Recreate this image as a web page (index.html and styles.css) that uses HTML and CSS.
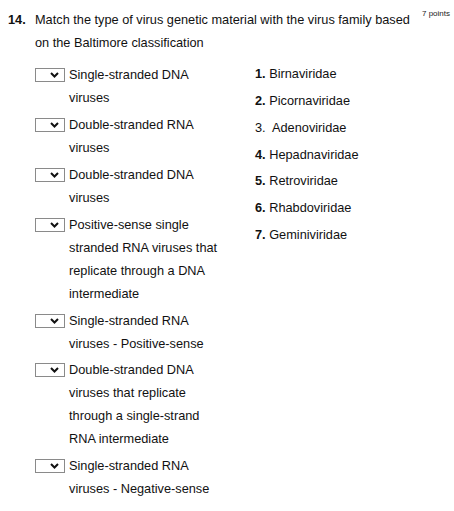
FILE: index.html
```html
<!DOCTYPE html>
<html>
<head>
<meta charset="utf-8">
<link rel="stylesheet" href="styles.css">
</head>
<body>
<div class="question">
  <div class="qhead">
    <div class="qnum">14.</div>
    <div class="qtext">Match the type of virus genetic material with the virus family based on the Baltimore classification</div>
    <div class="points">7 points</div>
  </div>
  <div class="match">
    <div class="left">
      <div class="item"><span class="sel"><svg width="9" height="6" viewBox="0 0 9 6"><path d="M1 1 L4.5 4.5 L8 1" fill="none" stroke="#111" stroke-width="2"/></svg></span><span class="lbl">Single-stranded DNA viruses</span></div>
      <div class="item"><span class="sel"><svg width="9" height="6" viewBox="0 0 9 6"><path d="M1 1 L4.5 4.5 L8 1" fill="none" stroke="#111" stroke-width="2"/></svg></span><span class="lbl">Double-stranded RNA viruses</span></div>
      <div class="item"><span class="sel"><svg width="9" height="6" viewBox="0 0 9 6"><path d="M1 1 L4.5 4.5 L8 1" fill="none" stroke="#111" stroke-width="2"/></svg></span><span class="lbl">Double-stranded DNA viruses</span></div>
      <div class="item"><span class="sel"><svg width="9" height="6" viewBox="0 0 9 6"><path d="M1 1 L4.5 4.5 L8 1" fill="none" stroke="#111" stroke-width="2"/></svg></span><span class="lbl">Positive-sense single stranded RNA viruses that replicate through a DNA intermediate</span></div>
      <div class="item"><span class="sel"><svg width="9" height="6" viewBox="0 0 9 6"><path d="M1 1 L4.5 4.5 L8 1" fill="none" stroke="#111" stroke-width="2"/></svg></span><span class="lbl">Single-stranded RNA viruses - Positive-sense</span></div>
      <div class="item"><span class="sel"><svg width="9" height="6" viewBox="0 0 9 6"><path d="M1 1 L4.5 4.5 L8 1" fill="none" stroke="#111" stroke-width="2"/></svg></span><span class="lbl">Double-stranded DNA viruses that replicate through a single-strand RNA intermediate</span></div>
      <div class="item"><span class="sel"><svg width="9" height="6" viewBox="0 0 9 6"><path d="M1 1 L4.5 4.5 L8 1" fill="none" stroke="#111" stroke-width="2"/></svg></span><span class="lbl">Single-stranded RNA viruses - Negative-sense</span></div>
    </div>
    <ol class="right">
      <li><b>1.</b> Birnaviridae</li>
      <li><b>2.</b> Picornaviridae</li>
      <li>3.&nbsp; Adenoviridae</li>
      <li><b>4.</b> Hepadnaviridae</li>
      <li><b>5.</b> Retroviridae</li>
      <li><b>6.</b> Rhabdoviridae</li>
      <li><b>7.</b> Geminiviridae</li>
    </ol>
  </div>
</div>
</body>
</html>
```

FILE: styles.css
```css
html, body {
  margin: 0;
  padding: 0;
  background: #fff;
}
body {
  font-family: "Liberation Sans", Arial, sans-serif;
  font-size: 12.75px;
  color: #111;
}
.question {
  padding: 8px 0 0 8px;
}
.qhead {
  display: flex;
  align-items: flex-start;
}
.qnum {
  width: 27px;
  font-weight: bold;
  line-height: 23px;
}
.qtext {
  width: 385px;
  line-height: 23px;
}
.points {
  font-size: 8px;
  margin-left: 2px;
  margin-top: 1px;
  color: #222;
}
.match {
  display: flex;
  margin-top: 9px;
  padding-left: 27px;
}
.left {
  width: 190px;
}
.item {
  display: flex;
  align-items: flex-start;
  line-height: 23px;
  margin-bottom: 3.9px;
}
.sel {
  flex: none;
  height: 12px;
  border: 1px solid #8a8a8a;
  background: #fff;
  margin-top: 5px;
  margin-right: 4px;
  display: flex;
  align-items: center;
  justify-content: flex-end;
  padding-right: 5px;
  box-sizing: content-box;
  width: 23px;
}
.sel svg {
  display: block;
}
.lbl {
  flex: 1;
}
.right {
  list-style: none;
  margin: -2px 0 0 0;
  padding: 0 0 0 30px;
}
.right li {
  line-height: 26.85px;
}
```
